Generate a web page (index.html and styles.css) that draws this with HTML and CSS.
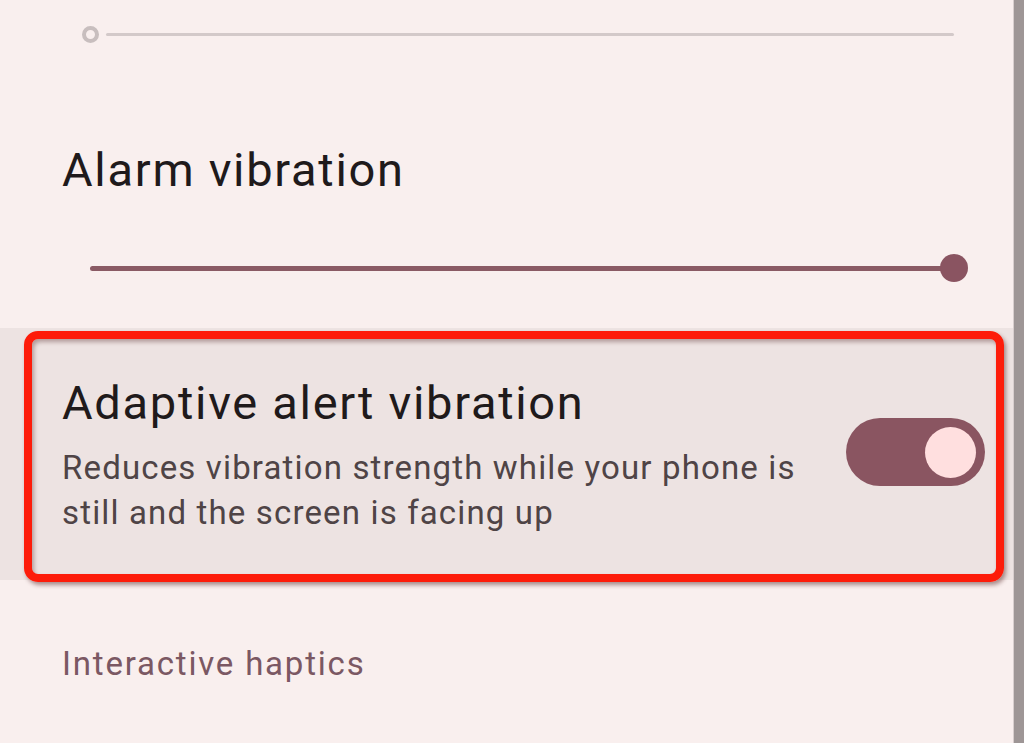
FILE: index.html
```html
<!DOCTYPE html>
<html lang="en">
<head>
    <meta charset="UTF-8">
    <meta name="viewport" content="width=device-width, initial-scale=1.0">
    <title>Vibration &amp; haptics</title>
    <link rel="stylesheet" href="styles.css">
</head>
<body>
    <div class="screen">
        <div class="content">
            <div class="slider slider-off">
                <span class="ring"></span>
                <span class="track"></span>
            </div>

            <div class="pref-title alarm-title">Alarm vibration</div>

            <div class="slider slider-on">
                <span class="track"></span>
                <span class="knob"></span>
            </div>

            <div class="pref-row">
                <div class="pref-text">
                    <div class="pref-title">Adaptive alert vibration</div>
                    <div class="pref-summary">Reduces vibration strength while your phone is<br>still and the screen is facing up</div>
                </div>
                <div class="switch">
                    <span class="thumb"></span>
                </div>
                <div class="mark"></div>
            </div>

            <div class="category">Interactive haptics</div>
        </div>
        <div class="scrollbar"></div>
    </div>
</body>
</html>
```

FILE: styles.css
```css
* {
    margin: 0;
    padding: 0;
    box-sizing: border-box;
}
body {
    background: #f9efee;
    font-family: Roboto, "Noto Sans", sans-serif;
    color: #1f1a1b;
    overflow: hidden;
}
.screen {
    display: flex;
    height: 743px;
}
.content {
    flex: 1;
    display: flex;
    flex-direction: column;
}
.scrollbar {
    width: 11px;
    background: #9e9696;
    border-left: 1px solid #d8cece;
}

/* sliders */
.slider {
    display: flex;
    align-items: center;
    height: 68px;
}
.slider-off {
    padding: 0 59px 0 82px;
}
.slider-off .ring {
    width: 17px;
    height: 17px;
    border: 4px solid #c8bebe;
    border-radius: 50%;
    margin-right: 7px;
}
.slider-off .track {
    flex: 1;
    height: 3px;
    background: #d3c9c9;
    border-radius: 2px;
}
.slider-on {
    padding: 0 45px 0 90px;
    height: 66px;
    margin: 37px 0 27px;
}
.slider-on .track {
    flex: 1;
    height: 5px;
    background: #8a5a64;
    border-radius: 3px;
    margin-right: -14px;
}
.slider-on .knob {
    width: 28px;
    height: 28px;
    border-radius: 50%;
    background: #8a5461;
}

.pref-title {
    font-size: 47px;
    line-height: 56px;
    letter-spacing: 1.7px;
}
.alarm-title {
    margin-top: 74px;
    padding-left: 62px;
}

/* highlighted preference */
.pref-row {
    position: relative;
    display: flex;
    align-items: center;
    height: 252px;
    padding: 0 28px 0 62px;
    background: #ede3e2;
}
.pref-text {
    flex: 1;
    padding-top: 2px;
}
.pref-summary {
    font-size: 33px;
    line-height: 45px;
    letter-spacing: 1.15px;
    color: #4f4446;
    margin-top: 14px;
    white-space: nowrap;
}
.switch {
    width: 139px;
    height: 68px;
    border-radius: 34px;
    background: #8a5561;
    display: flex;
    align-items: center;
    justify-content: flex-end;
    padding-right: 9px;
    margin-bottom: 4px;
}
.switch .thumb {
    width: 51px;
    height: 51px;
    border-radius: 50%;
    background: #ffdfdf;
}
.mark {
    position: absolute;
    left: 24px;
    right: 9px;
    top: 3px;
    bottom: -2px;
    border: 8px solid #fd1c0a;
    border-radius: 14px;
    box-shadow: 2px 3px 4px rgba(70, 20, 20, 0.45), inset 2px 3px 4px rgba(70, 20, 20, 0.35);
}

.category {
    font-size: 33px;
    line-height: 40px;
    letter-spacing: 1.8px;
    color: #7b5863;
    padding: 64px 0 0 62px;
}
```
